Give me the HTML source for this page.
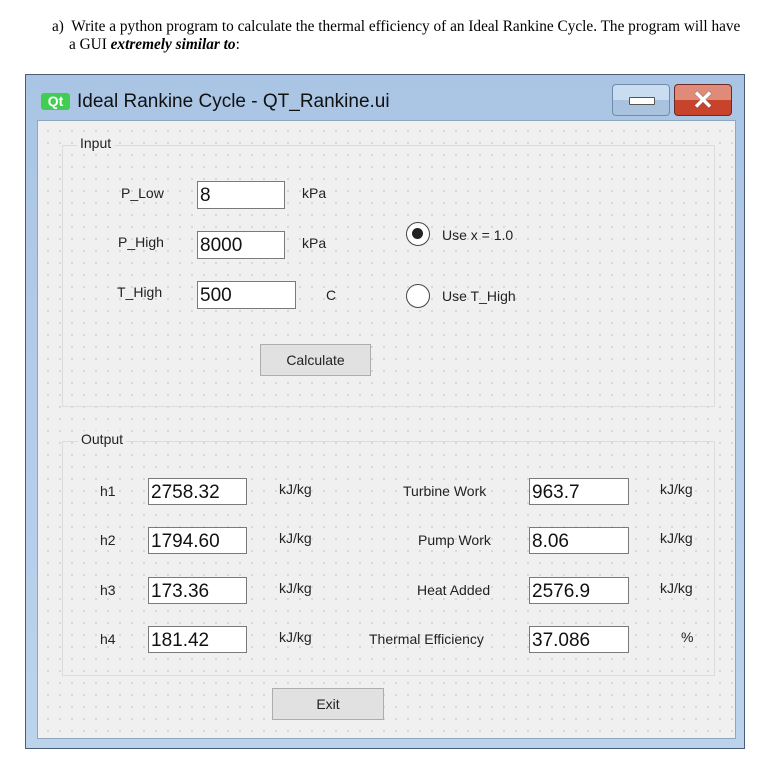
<!DOCTYPE html>
<html><head><style>
body{margin:0;width:767px;height:780px;background:#fff;position:relative;overflow:hidden;font-family:"Liberation Sans",sans-serif}
.q{position:absolute;left:52px;font-family:"Liberation Serif",serif;font-size:15.3px;color:#000}
#win{position:absolute;left:25px;top:74px;width:720px;height:675px;background:linear-gradient(#aac5e4,#bcd3ec);border:1px solid #4a5e75;box-sizing:border-box}
#client{position:absolute;left:37px;top:120px;width:699px;height:619px;background-color:#f0f0f0;background-image:radial-gradient(circle,#b8b8b8 0.6px,transparent 0.9px);background-size:12px 12px;background-position:4px 4px;border:1px solid #8fa6bf;box-sizing:border-box}
.a{position:absolute}
.t{position:absolute;font-size:14px;color:#222}
.grp{position:absolute;border:1px solid #dcdcdc}
.gl{position:absolute;background:#f0f0f0;padding:0 3px;font-size:14px;color:#222}
.in{position:absolute;background:#fff;border:1px solid #7a7a7a;box-sizing:border-box;font-size:19px;color:#111;padding-left:2px;line-height:28px}
.btn{position:absolute;background:#e1e1e1;border:1px solid #adadad;box-sizing:border-box;text-align:center;font-size:14px;color:#222}
</style></head><body>
<div class="q" style="top:18px">a)&nbsp; Write a python program to calculate the thermal efficiency of an Ideal Rankine Cycle. The program will have</div>
<div class="q" style="top:36px;left:69px">a GUI <b><i>extremely similar to</i></b>:</div>

<div id="win"></div>
<div class="a" style="left:41px;top:93px;width:29px;height:17px;background:#41cd52;border-radius:3px;color:#fff;font-size:14px;font-weight:bold;text-align:center;line-height:17px">Qt</div>
<div class="a" style="left:77px;top:91px;font-size:19px;color:#111">Ideal Rankine Cycle - QT_Rankine.ui</div>
<div class="a" style="left:612px;top:84px;width:58px;height:32px;border:1px solid #6d8bab;border-radius:4px;box-sizing:border-box;background:linear-gradient(#c9dcf0 50%,#a9c3df 50%)"><div class="a" style="left:16px;top:12px;width:24px;height:6px;background:#fff;border:1px solid #555;border-radius:1px"></div></div>
<div class="a" style="left:674px;top:84px;width:58px;height:32px;border:1px solid #6b2a2a;border-radius:4px;box-sizing:border-box;background:linear-gradient(#e08a78 50%,#c8432c 50%);color:#fff;font-size:26px;font-weight:bold;text-align:center;line-height:30px;text-shadow:0 0 1px #333">✕</div>

<div id="client"></div>

<div class="grp" style="left:62px;top:145px;width:651px;height:260px"></div>
<div class="gl" style="left:77px;top:135px">Input</div>
<div class="t" style="left:121px;top:185px">P_Low</div>
<div class="in" style="left:197px;top:181px;width:88px;height:28px">8</div>
<div class="t" style="left:302px;top:185px">kPa</div>
<div class="t" style="left:118px;top:234px">P_High</div>
<div class="in" style="left:197px;top:231px;width:88px;height:28px">8000</div>
<div class="t" style="left:302px;top:235px">kPa</div>
<div class="t" style="left:117px;top:284px">T_High</div>
<div class="in" style="left:197px;top:281px;width:99px;height:28px">500</div>
<div class="t" style="left:326px;top:287px">C</div>
<div class="a" style="left:406px;top:222px;width:24px;height:24px;border:1.5px solid #444;border-radius:50%;background:#fff;box-sizing:border-box"><div class="a" style="left:5px;top:5px;width:11px;height:11px;border-radius:50%;background:#222"></div></div>
<div class="t" style="left:442px;top:227px">Use x = 1.0</div>
<div class="a" style="left:406px;top:284px;width:24px;height:24px;border:1.5px solid #444;border-radius:50%;background:#fff;box-sizing:border-box"></div>
<div class="t" style="left:442px;top:288px">Use T_High</div>
<div class="btn" style="left:260px;top:344px;width:111px;height:32px;line-height:30px">Calculate</div>

<div class="grp" style="left:62px;top:441px;width:651px;height:233px"></div>
<div class="gl" style="left:78px;top:431px">Output</div>

<div class="t" style="left:100px;top:483px">h1</div>
<div class="in" style="left:148px;top:478px;width:99px;height:27px">2758.32</div>
<div class="t" style="left:279px;top:481px">kJ/kg</div>
<div class="t" style="left:100px;top:532px">h2</div>
<div class="in" style="left:148px;top:527px;width:99px;height:27px">1794.60</div>
<div class="t" style="left:279px;top:530px">kJ/kg</div>
<div class="t" style="left:100px;top:582px">h3</div>
<div class="in" style="left:148px;top:577px;width:99px;height:27px">173.36</div>
<div class="t" style="left:279px;top:580px">kJ/kg</div>
<div class="t" style="left:100px;top:631px">h4</div>
<div class="in" style="left:148px;top:626px;width:99px;height:27px">181.42</div>
<div class="t" style="left:279px;top:629px">kJ/kg</div>

<div class="t" style="left:403px;top:483px">Turbine Work</div>
<div class="in" style="left:529px;top:478px;width:100px;height:27px">963.7</div>
<div class="t" style="left:660px;top:481px">kJ/kg</div>
<div class="t" style="left:418px;top:532px">Pump Work</div>
<div class="in" style="left:529px;top:527px;width:100px;height:27px">8.06</div>
<div class="t" style="left:660px;top:530px">kJ/kg</div>
<div class="t" style="left:417px;top:582px">Heat Added</div>
<div class="in" style="left:529px;top:577px;width:100px;height:27px">2576.9</div>
<div class="t" style="left:660px;top:580px">kJ/kg</div>
<div class="t" style="left:369px;top:631px">Thermal Efficiency</div>
<div class="in" style="left:529px;top:626px;width:100px;height:27px">37.086</div>
<div class="t" style="left:681px;top:629px">%</div>

<div class="btn" style="left:272px;top:688px;width:112px;height:32px;line-height:30px">Exit</div>
</body></html>
